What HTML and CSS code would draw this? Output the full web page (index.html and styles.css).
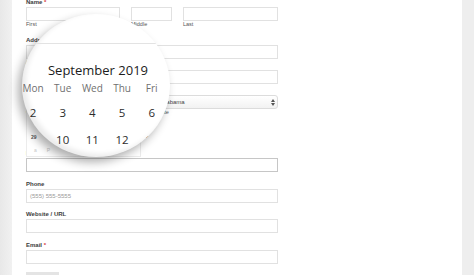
FILE: index.html
```html
<!DOCTYPE html>
<html lang="en">
<head>
<meta charset="utf-8">
<title>Form with date picker</title>
<link rel="stylesheet" href="styles.css">
</head>
<body>
<div class="strip strip-left"></div>
<main class="page">
  <form class="form">
    <div class="field field-name">
      <div class="label">Name <span class="req">*</span></div>
      <div class="name-row">
        <div><div class="input"></div><div class="sublabel">First</div></div>
        <div><div class="input"></div><div class="sublabel">Middle</div></div>
        <div><div class="input"></div><div class="sublabel">Last</div></div>
      </div>
    </div>
    <div class="field field-address">
      <div class="label">Address</div>
      <div class="input"></div>
      <div class="sublabel">Address Line 1</div>
      <div class="input addr2"></div>
      <div class="sublabel">Address Line 2</div>
      <div class="addr-row">
        <div><div class="input"></div><div class="sublabel">City</div></div>
        <div>
          <div class="select"><span>Alabama</span>
            <svg class="arrows" width="4" height="7" viewBox="0 0 4 7"><path d="M0 3 L2 0 L4 3 Z M0 4 L2 7 L4 4 Z" fill="#555"/></svg>
          </div>
          <div class="sublabel">State</div>
        </div>
      </div>
    </div>
    <div class="field field-date">
      <div class="label">Date</div>
      <div class="input input-focus"></div>
    </div>
    <div class="field field-gap field-phone">
      <div class="label">Phone</div>
      <div class="input"><span class="placeholder">(555) 555-5555</span></div>
    </div>
    <div class="field field-gap">
      <div class="label">Website / URL</div>
      <div class="input"></div>
    </div>
    <div class="field field-gap">
      <div class="label">Email <span class="req">*</span></div>
      <div class="input"></div>
    </div>
    <button type="button" class="btn">Submit</button>
  </form>
</main>
<div class="strip strip-right"></div>

<div class="popup">
  <div class="mini-row mini-strong"><span>29</span></div>
  <div class="mini-row mini-faint"><span>a</span><span>P</span></div>
</div>

<div class="lens">
  <div class="lens-line"></div>
  <div class="cal-title">September 2019</div>
  <div class="cal-grid">
    <span class="dow">Sun</span><span class="dow">Mon</span><span class="dow">Tue</span><span class="dow">Wed</span><span class="dow">Thu</span><span class="dow">Fri</span><span class="dow">Sat</span>
    <span class="day">1</span><span class="day">2</span><span class="day">3</span><span class="day">4</span><span class="day">5</span><span class="day">6</span><span class="day">7</span>
    <span class="day">8</span><span class="day">9</span><span class="day">10</span><span class="day">11</span><span class="day">12</span><span class="day">13</span><span class="day">14</span>
  </div>
</div>
</body>
</html>
```
FILE: styles.css
```css
* { box-sizing: border-box; }
html, body { margin: 0; padding: 0; }
body {
  position: relative;
  display: flex;
  height: 275px;
  overflow: hidden;
  background: #eeeeee;
  font-family: "Liberation Sans", Arial, sans-serif;
}
.strip { width: 12px; flex: none; background: #eeeeee; }
.strip-left { background: linear-gradient(to right, #e8e8e8, #f1f1f1); }
.page { flex: 1; background: #ffffff; padding-left: 14px; }
.form { width: 252px; }

.label { font-size: 6px; font-weight: bold; line-height: 10px; color: #3c3c3c; }
.req { color: #d43a3a; }
.input {
  height: 14px;
  border: 1px solid #e1e1e1;
  background: #fff;
  display: flex;
  align-items: center;
}
.sublabel { font-size: 5.5px; line-height: 7px; color: #555; }
.placeholder { font-size: 6px; color: #9a9a9a; padding-left: 3px; }

.field-name { margin-top: -3px; }
.name-row { display: grid; grid-template-columns: 94px 41px 95px; column-gap: 11px; }
.field-address { margin-top: 7px; }
.addr2 { margin-top: 4px; }
.addr-row { margin-top: 4px; display: grid; grid-template-columns: 1fr 1fr; column-gap: 8px; }
.select {
  height: 14px;
  border: 1px solid #dcdcdc;
  border-radius: 3px;
  background: linear-gradient(#ffffff, #f2f2f2);
  display: flex;
  align-items: center;
  justify-content: space-between;
  padding: 0 2px 0 4px;
  font-size: 6px;
  color: #444;
}
.arrows { display: block; }
.field-date { margin-top: 32px; }
.input-focus { border-color: #c6c6c6; }
.field-gap { margin-top: 6.5px; }
.btn {
  display: block;
  margin-top: 8px;
  width: 33px;
  height: 14px;
  padding: 0;
  border: 0;
  background: #e4e4e4;
  font-family: "Liberation Sans", Arial, sans-serif;
  font-size: 6px;
  color: #555;
}

/* small date picker popup under the magnifier */
.popup {
  position: absolute;
  left: 26px;
  top: 92px;
  width: 115px;
  height: 65px;
  border: 1px solid #ececec;
  background: #fff;
  padding: 41px 0 0 4px;
  z-index: 1;
}
.mini-row { display: flex; gap: 10px; font-size: 5px; line-height: 7px; }
.mini-strong { font-weight: bold; color: #555; }
.mini-faint { margin-top: 6px; padding-left: 3px; color: #c8c8c8; }

/* magnifier lens */
.lens {
  position: absolute;
  left: 22px;
  top: 14px;
  width: 148px;
  height: 143px;
  border-radius: 50%;
  background: #fff;
  overflow: hidden;
  padding-top: 29px;
  z-index: 2;
  box-shadow: -4px 5px 10px rgba(0, 0, 0, 0.32), inset 4px -3px 5px rgba(0, 0, 0, 0.08);
  font-family: "Open Sans", "DejaVu Sans", sans-serif;
}
.lens-line { border-top: 1px solid #e3e3e3; }
.cal-title {
  margin-top: 17.8px;
  padding-left: 4px;
  line-height: 16px;
  font-size: 13px;
  color: #1c1c1c;
  text-align: center;
  white-space: nowrap;
}
.cal-grid {
  margin-top: 4.2px;
  margin-left: -33.55px;
  display: grid;
  grid-template-columns: repeat(7, 29.7px);
  grid-template-rows: 12px 14px 14px;
  row-gap: 12.4px;
  text-align: center;
}
.dow { font-size: 10px; line-height: 12px; color: #707070; }
.day { font-size: 11.5px; line-height: 14px; color: #2c2c2c; }
```
